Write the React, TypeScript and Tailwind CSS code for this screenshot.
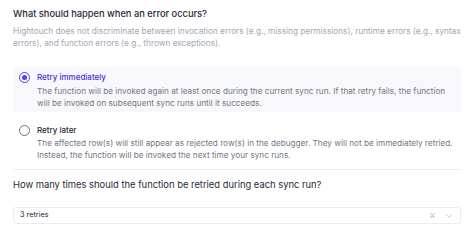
import React, { useState } from 'react';

const options = [
  {
    id: 'immediate',
    label: 'Retry immediately',
    lines: [
      'The function will be invoked again at least once during the current sync run. If that retry fails, the function',
      'will be invoked on subsequent sync runs until it succeeds.',
    ],
  },
  {
    id: 'later',
    label: 'Retry later',
    lines: [
      'The affected row(s) will still appear as rejected row(s) in the debugger. They will not be immediately retried.',
      'Instead, the function will be invoked the next time your sync runs.',
    ],
  },
];

export default function App() {
  const [selected, setSelected] = useState('immediate');

  return (
    <div className="w-[474px] h-[246px] bg-white px-[13px] pt-[7px] font-['Inter',sans-serif] antialiased">
      <h2 className="text-[9.3px] leading-[14px] font-medium text-[#1f2937]">What should happen when an error occurs?</h2>
      <p className="mt-[4px] whitespace-nowrap text-[8.25px] leading-[12px] text-[#a3a8b3]">
        Hightouch does not discriminate between invocation errors (e.g., missing permissions), runtime errors (e.g., syntax
        <br />
        errors), and function errors (e.g., thrown exceptions).
      </p>

      <div className="mt-[18px] w-[448px]">
        {options.map((opt) => {
          const active = selected === opt.id;
          return (
            <button
              key={opt.id}
              type="button"
              onClick={() => setSelected(opt.id)}
              className={`flex w-full text-left gap-[7px] px-[6px] ${
                active ? 'bg-[#f8f7fc] pt-[5px] h-[45px] rounded-[3px]' : 'bg-white pt-[13px] h-[58px] border-b border-[#eeeef2]'
              }`}
            >
              <span
                className={`flex h-[11px] w-[11px] shrink-0 items-center justify-center rounded-full ${
                  active ? 'border-[1.5px] border-[#5a3ee0]' : 'border border-[#6b7280]'
                }`}
              >
                {active && <span className="h-[5px] w-[5px] rounded-full bg-[#5a3ee0]" />}
              </span>
              <span className="flex flex-col min-w-0">
                <span
                  className={`text-[8px] leading-[10px] font-medium ${active ? 'text-[#4b2fd6]' : 'text-[#1f2937]'}`}
                >
                  {opt.label}
                </span>
                <span
                  className={`${active ? 'mt-[3px]' : 'mt-[2px]'} whitespace-nowrap text-[8.2px] leading-[12px] text-[#727784]`}
                >
                  {opt.lines[0]}
                  <br />
                  {opt.lines[1]}
                </span>
              </span>
            </button>
          );
        })}
      </div>

      <h3 className="mt-[8px] text-[9.4px] leading-[14px] text-[#1f2937]">
        How many times should the function be retried during each sync run?
      </h3>

      <div className="mt-[15px] flex h-[17px] w-[448px] items-center justify-between rounded-[3px] border border-[#ececf0] pl-[6px] pr-[7px]">
        <span className="text-[7.3px] text-[#1f2937]">3 retries</span>
        <span className="flex items-center gap-[9px] text-[#c7c9d0]">
          <svg width="7" height="7" viewBox="0 0 10 10" fill="none" stroke="currentColor" strokeWidth="1.5" strokeLinecap="round">
            <path d="M2 2l6 6M8 2l-6 6" />
          </svg>
          <svg width="8" height="6" viewBox="0 0 12 8" fill="none" stroke="currentColor" strokeWidth="1.5" strokeLinecap="round" strokeLinejoin="round">
            <path d="M2 2l4 4 4-4" />
          </svg>
        </span>
      </div>
    </div>
  );
}
